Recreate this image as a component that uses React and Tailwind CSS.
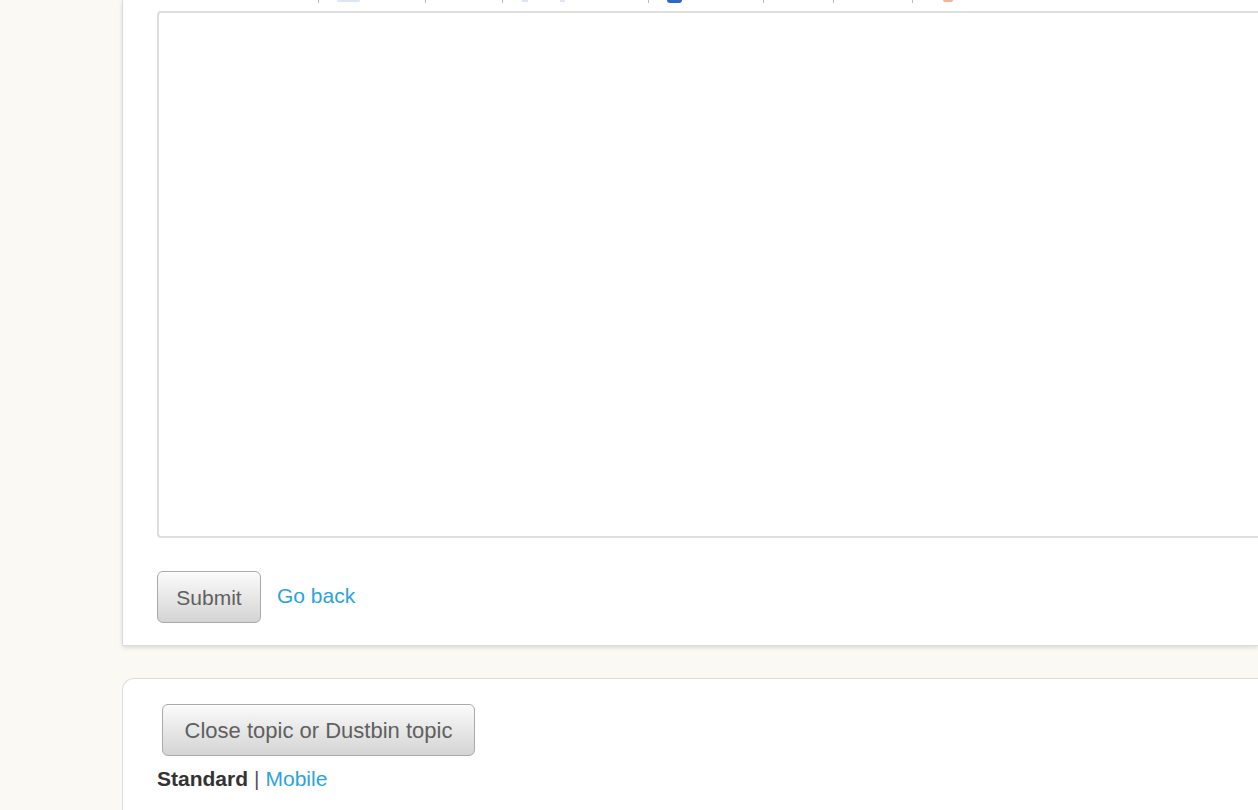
import React from 'react';

// only the bottom few pixels of the editor toolbar are visible at the top of the view
const Toolbar = () => (
  <div className="flex items-start h-[3px] overflow-hidden">
    <div className="ml-[195px] w-px h-[3px] bg-[#bbb]" />
    <div className="ml-[18px] w-[23px] h-[2px] rounded-b bg-[#dbe6f7]" />
    <div className="ml-[65px] w-px h-[3px] bg-[#bbb]" />
    <div className="ml-[76px] w-px h-[3px] bg-[#bbb]" />
    <div className="ml-[19px] w-[6px] h-[2px] bg-[#dde6f5]" />
    <div className="ml-[32px] w-[5px] h-[2px] bg-[#dde6f5]" />
    <div className="ml-[83px] w-px h-[3px] bg-[#bbb]" />
    <div className="ml-[18px] w-[15px] h-[3px] rounded-b bg-[#2f66c8]" />
    <div className="ml-[81px] w-px h-[3px] bg-[#bbb]" />
    <div className="ml-[69px] w-px h-[3px] bg-[#bbb]" />
    <div className="ml-[78px] w-px h-[3px] bg-[#bbb]" />
    <div className="ml-[30px] w-[10px] h-[2px] rounded-b bg-[#f5b48a]" />
  </div>
);

const buttonClass =
  'border border-[#a9a9a9] rounded-[6px] bg-gradient-to-b from-[#fbfbfb] to-[#d4d4d4] text-[#606060] shadow-[inset_0_1px_0_#fff]';

export default function App() {
  return (
    <div
      className="min-h-screen h-[810px] overflow-hidden bg-[#faf9f3] pl-[122px]"
      style={{ fontFamily: '"Liberation Sans", Arial, sans-serif' }}
    >
      <div className="bg-white border-l border-b border-[#dcdcdc] shadow-[0_2px_4px_rgba(0,0,0,0.12)] h-[646px]">
        <Toolbar />
        <div className="pl-[34px] pt-[8px]">
          <div className="h-[527px] border-2 border-[#dedede] border-r-0 rounded-l-[4px] bg-white" />
          <div className="flex items-center mt-[33px]">
            <button className={`${buttonClass} w-[104px] h-[52px] pt-[2px] text-[21px]`}>Submit</button>
            <a className="ml-[16px] text-[21px] text-[#2ba3dc] leading-none -mt-[4px]">Go back</a>
          </div>
        </div>
      </div>
      <div className="mt-[32px] bg-white border-l border-t border-[#dcdcdc] rounded-tl-[12px] h-[140px] pl-[39px] pt-[25px]">
        <button className={`${buttonClass} w-[313px] h-[52px] pt-[1px] text-[22px]`}>Close topic or Dustbin topic</button>
        <div className="mt-[12px] -ml-[5px] text-[21px] text-[#333] leading-none">
          <span className="font-bold">Standard</span>
          <span className="mx-[6px] text-[#555]">|</span>
          <a className="text-[#2ba3dc]">Mobile</a>
        </div>
      </div>
    </div>
  );
}
